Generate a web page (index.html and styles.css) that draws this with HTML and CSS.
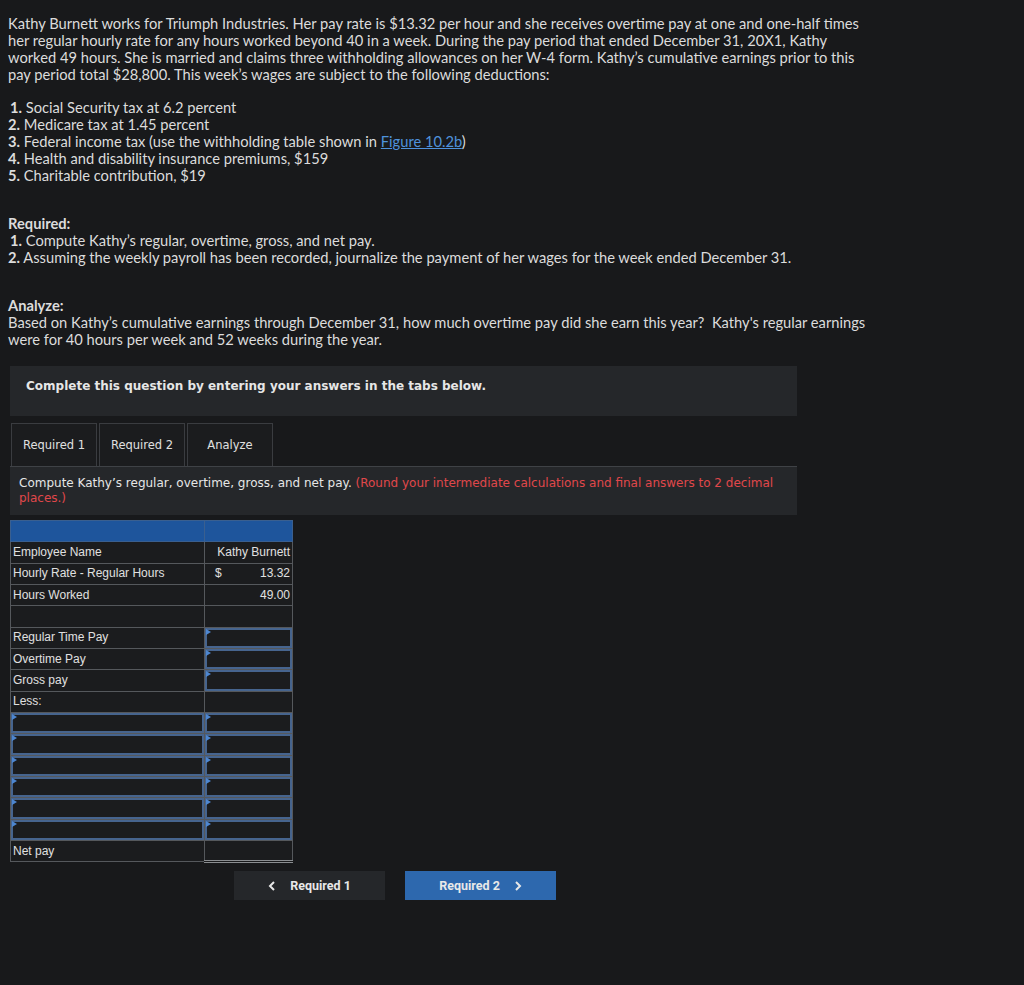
FILE: index.html
```html
<!DOCTYPE html>
<html>
<head>
<meta charset="utf-8">
<link rel="stylesheet" href="styles.css">
</head>
<body>
<div class="page">
  <p class="para">Kathy Burnett works for Triumph Industries. Her pay rate is $13.32 per hour and she receives overtime pay at one and one-half times her regular hourly rate for any hours worked beyond 40 in a week. During the pay period that ended December 31, 20X1, Kathy worked 49 hours. She is married and claims three withholding allowances on her W-4 form. Kathy’s cumulative earnings prior to this pay period total $28,800. This week’s wages are subject to the following deductions:</p>
  <ol class="list">
    <li><b>1.</b> Social Security tax at 6.2 percent</li>
    <li><b>2.</b> Medicare tax at 1.45 percent</li>
    <li><b>3.</b> Federal income tax (use the withholding table shown in <a class="link" href="#">Figure 10.2b</a>)</li>
    <li><b>4.</b> Health and disability insurance premiums, $159</li>
    <li><b>5.</b> Charitable contribution, $19</li>
  </ol>
  <div class="section">
    <div class="head">Required:</div>
    <div class="ind"><b>1.</b> Compute Kathy’s regular, overtime, gross, and net pay.</div>
    <div><b>2.</b> Assuming the weekly payroll has been recorded, journalize the payment of her wages for the week ended December 31.</div>
  </div>
  <div class="section">
    <div class="head">Analyze:</div>
    <div>Based on Kathy’s cumulative earnings through December 31, how much overtime pay did she earn this year?&nbsp; Kathy's regular earnings were for 40 hours per week and 52 weeks during the year.</div>
  </div>

  <div class="complete">Complete this question by entering your answers in the tabs below.</div>

  <div class="tabs">
    <div class="tab active">Required 1</div>
    <div class="tab">Required 2</div>
    <div class="tab">Analyze</div>
  </div>
  <div class="instr">Compute Kathy’s regular, overtime, gross, and net pay. <span class="red">(Round your intermediate calculations and final answers to 2 decimal places.)</span></div>

  <table class="grid">
    <tr class="hdr"><td class="c1"></td><td class="c2"></td></tr>
    <tr><td class="c1">Employee Name</td><td class="c2 r">Kathy Burnett</td></tr>
    <tr><td class="c1">Hourly Rate - Regular Hours</td><td class="c2"><div class="money"><span>$</span><span>13.32</span></div></td></tr>
    <tr><td class="c1">Hours Worked</td><td class="c2 r">49.00</td></tr>
    <tr><td class="c1"></td><td class="c2"></td></tr>
    <tr><td class="c1">Regular Time Pay</td><td class="c2 in"><div class="box"></div></td></tr>
    <tr><td class="c1">Overtime Pay</td><td class="c2 in"><div class="box"></div></td></tr>
    <tr><td class="c1">Gross pay</td><td class="c2 in"><div class="box"></div></td></tr>
    <tr><td class="c1">Less:</td><td class="c2"></td></tr>
    <tr><td class="c1 in"><div class="box"></div></td><td class="c2 in"><div class="box"></div></td></tr>
    <tr><td class="c1 in"><div class="box"></div></td><td class="c2 in"><div class="box"></div></td></tr>
    <tr><td class="c1 in"><div class="box"></div></td><td class="c2 in"><div class="box"></div></td></tr>
    <tr><td class="c1 in"><div class="box"></div></td><td class="c2 in"><div class="box"></div></td></tr>
    <tr><td class="c1 in"><div class="box"></div></td><td class="c2 in"><div class="box"></div></td></tr>
    <tr><td class="c1 in"><div class="box"></div></td><td class="c2 in"><div class="box"></div></td></tr>
    <tr><td class="c1">Net pay</td><td class="c2 net"></td></tr>
  </table>

  <div class="nav">
    <div class="btn prev"><svg class="chev" width="8" height="10" viewBox="0 0 8 10"><polyline points="6,1 2,5 6,9" fill="none" stroke="#e8e8e8" stroke-width="2"/></svg>Required 1</div>
    <div class="btn next">Required 2<svg class="chev r" width="8" height="10" viewBox="0 0 8 10"><polyline points="2,1 6,5 2,9" fill="none" stroke="#e8e8e8" stroke-width="2"/></svg></div>
  </div>
</div>
</body>
</html>
```
FILE: styles.css
```css
html, body {
  margin: 0;
  padding: 0;
  background: #18191b;
}
.page {
  padding: 15px 8px 40px 8px;
  color: #dcdcdc;
  font-family: Lato, "Open Sans", Arial, sans-serif;
  font-size: 14.7px;
  line-height: 17px;
}
.para {
  margin: 0;
  width: 865px;
}
.list {
  list-style: none;
  margin: 16px 0 0 0;
  padding: 0;
}
.list li:first-child, .ind { padding-left: 2px; }
.link {
  color: #4f92dc;
  text-decoration: underline;
}
.section {
  margin-top: 31px;
  width: 880px;
}
.head {
  font-weight: 700;
}
.complete {
  margin: 18px 0 0 2px;
  width: 771px;
  height: 50px;
  padding-left: 16px;
  background: #25272a;
  font-family: "DejaVu Sans", Verdana, sans-serif;
  font-weight: 700;
  font-size: 12px;
  line-height: 40px;
  color: #e6e6e6;
}
.tabs {
  display: flex;
  gap: 2px;
  margin: 7px 0 0 3px;
}
.tab {
  width: 84px;
  height: 42px;
  border: 1px solid #3a3c40;
  border-bottom: none;
  font-family: "DejaVu Sans", Verdana, sans-serif;
  font-size: 11.5px;
  line-height: 42px;
  text-align: center;
  color: #e0e0e0;
  background: #1b1c1e;
}
.instr {
  margin-left: 2px;
  width: 769px;
  padding: 9px 9px 9px 9px;
  background: #25272a;
  border-top: 1px solid #3f4246;
  font-family: "DejaVu Sans", Verdana, sans-serif;
  font-size: 12px;
  line-height: 15px;
  color: #e6e6e6;
}
.red { color: #e0474a; }
.grid {
  margin: 5px 0 0 2px;
  border-collapse: collapse;
  font-family: "Liberation Sans", Arial, sans-serif;
  font-size: 12px;
  color: #e0e0e0;
}
.grid td {
  height: 21.33px;
  padding: 0 2px;
  border: 1px solid #55585c;
  background: #1b1c1e;
  position: relative;
  box-sizing: border-box;
}
.grid .c1 { width: 194px; }
.grid .c2 { width: 88px; }
.grid .r { text-align: right; }
.grid .hdr td {
  background: #1e559c;
  border-color: #3a5f8f;
}
.money {
  display: flex;
  justify-content: space-between;
  padding-left: 8px;
}
.grid td.in {
  padding: 0;
}
.box {
  position: absolute;
  left: 0;
  top: 0;
  right: 0;
  bottom: 0;
  box-shadow: inset 0 0 0 2px #46648e;
}
.box::before {
  content: "";
  position: absolute;
  left: 1px;
  top: 1px;
  border-left: 5px solid #4d86d0;
  border-top: 3px solid transparent;
  border-bottom: 3px solid transparent;
}
.grid td.net {
  border-bottom: 3px double #8a8d90;
}
.nav {
  display: flex;
  gap: 20px;
  margin: 8px 0 0 226px;
}
.btn {
  width: 151px;
  height: 29px;
  display: flex;
  align-items: center;
  justify-content: center;
  font-family: Roboto, "Liberation Sans", sans-serif;
  font-weight: 700;
  font-size: 12.5px;
  color: #e8e8e8;
}
.prev { background: #25272a; }
.next { background: #2d68ae; }
.chev { margin-right: 14px; }
.chev.r { margin: 0 0 0 14px; }
```
